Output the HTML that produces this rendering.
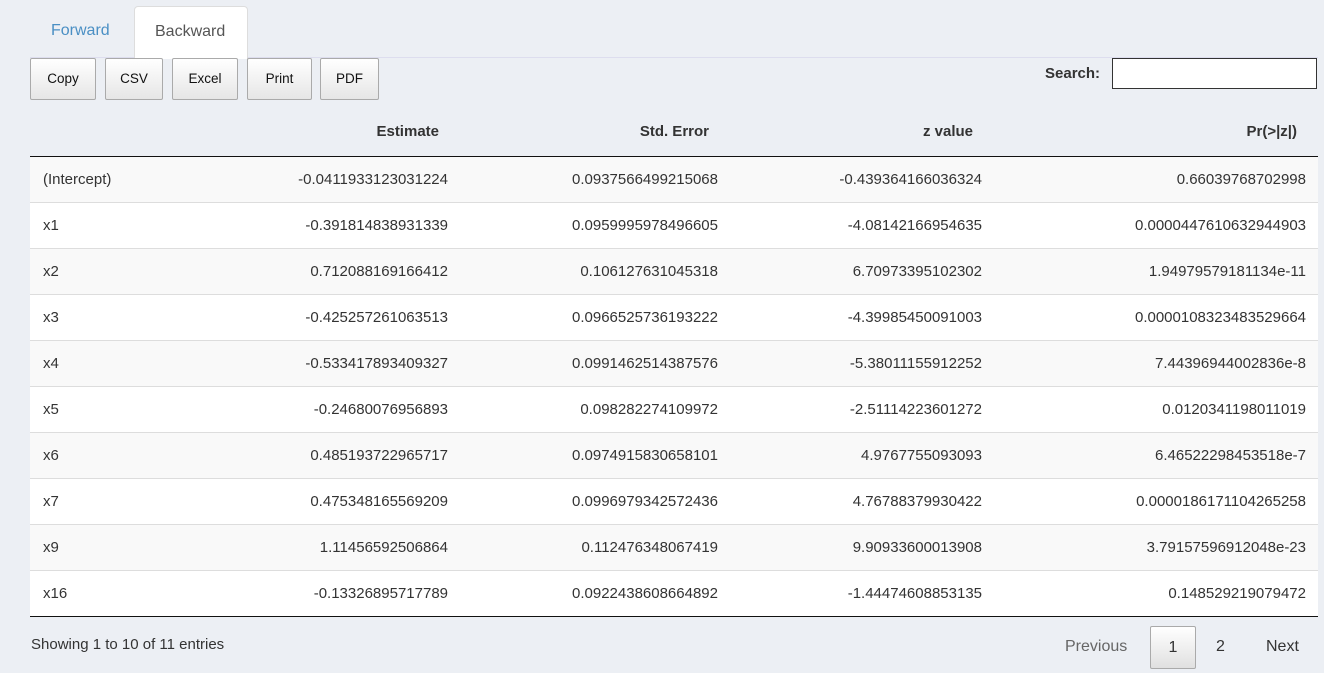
<!DOCTYPE html>
<html><head><style>
body{margin:0;background:#eceff4;font-family:"Liberation Sans",sans-serif;color:#333;width:1324px;height:673px;overflow:hidden;position:relative}
.tabs{position:absolute;top:6px;left:30px;right:6px;height:51px;border-bottom:1px solid #dde}
.tab{position:absolute;top:0;height:51px;line-height:50px;font-size:16px;padding:0 20px}
.t1{left:1px;color:#4a8fc4}
.t2{left:104px;width:72px;background:#fff;border:1px solid #ddd;border-bottom:none;border-radius:4px 4px 0 0;color:#555;height:52px}
.btn{position:absolute;top:58px;height:40px;border:1px solid #aaa;border-radius:2px;background:linear-gradient(#fff,#e6e6e6);font-size:13.5px;line-height:40px;text-align:center;color:#111}
.search{position:absolute;top:65px;left:1045px;font-weight:bold;font-size:15px}
.sbox{position:absolute;top:58px;left:1112px;width:203px;height:29px;border:1px solid #333;background:#fff}
table{position:absolute;top:107px;left:30px;width:1288px;border-collapse:collapse;font-size:15px}
th{height:49px;text-align:right;font-weight:bold;border-bottom:1px solid #111;padding:0 21px 0 0}
td{height:45px;text-align:right;padding:0 12px 0 0;border-top:1px solid #ddd}
td:first-child{text-align:left;padding-left:13px}
tr:nth-child(odd) td{background:#f9f9f9}
tr:nth-child(even) td{background:#fff}
tbody tr:first-child td{border-top:none}
tbody tr:last-child td{border-bottom:1px solid #111}
.info{position:absolute;top:636px;left:31px;font-size:15px}
.pg{position:absolute;top:626px;height:41px;line-height:41px;font-size:16px;color:#333}
</style></head><body>
<div class="tabs"><div class="tab t1">Forward</div><div class="tab t2">Backward</div></div>
<div class="btn" style="left:30px;width:64px">Copy</div>
<div class="btn" style="left:105px;width:56px">CSV</div>
<div class="btn" style="left:172px;width:64px">Excel</div>
<div class="btn" style="left:247px;width:63px">Print</div>
<div class="btn" style="left:320px;width:57px">PDF</div>
<div class="search">Search:</div><div class="sbox"></div>
<table>
<colgroup><col style="width:150px"><col style="width:280px"><col style="width:270px"><col style="width:264px"><col></colgroup>
<thead><tr><th></th><th>Estimate</th><th>Std. Error</th><th>z value</th><th>Pr(&gt;|z|)</th></tr></thead>
<tbody>
<tr><td>(Intercept)</td><td>-0.0411933123031224</td><td>0.0937566499215068</td><td>-0.439364166036324</td><td>0.66039768702998</td></tr>
<tr><td>x1</td><td>-0.391814838931339</td><td>0.0959995978496605</td><td>-4.08142166954635</td><td>0.0000447610632944903</td></tr>
<tr><td>x2</td><td>0.712088169166412</td><td>0.106127631045318</td><td>6.70973395102302</td><td>1.94979579181134e-11</td></tr>
<tr><td>x3</td><td>-0.425257261063513</td><td>0.0966525736193222</td><td>-4.39985450091003</td><td>0.0000108323483529664</td></tr>
<tr><td>x4</td><td>-0.533417893409327</td><td>0.0991462514387576</td><td>-5.38011155912252</td><td>7.44396944002836e-8</td></tr>
<tr><td>x5</td><td>-0.24680076956893</td><td>0.098282274109972</td><td>-2.51114223601272</td><td>0.0120341198011019</td></tr>
<tr><td>x6</td><td>0.485193722965717</td><td>0.0974915830658101</td><td>4.9767755093093</td><td>6.46522298453518e-7</td></tr>
<tr><td>x7</td><td>0.475348165569209</td><td>0.0996979342572436</td><td>4.76788379930422</td><td>0.0000186171104265258</td></tr>
<tr><td>x9</td><td>1.11456592506864</td><td>0.112476348067419</td><td>9.90933600013908</td><td>3.79157596912048e-23</td></tr>
<tr><td>x16</td><td>-0.13326895717789</td><td>0.0922438608664892</td><td>-1.44474608853135</td><td>0.148529219079472</td></tr>
</tbody></table>
<div class="info">Showing 1 to 10 of 11 entries</div>
<div class="pg" style="left:1065px;color:#666">Previous</div>
<div class="pg" style="left:1150px;width:44px;text-align:center;border:1px solid #aaa;border-radius:2px;background:linear-gradient(#fff,#e0e0e0)">1</div>
<div class="pg" style="left:1216px">2</div>
<div class="pg" style="left:1266px">Next</div>
</body></html>
